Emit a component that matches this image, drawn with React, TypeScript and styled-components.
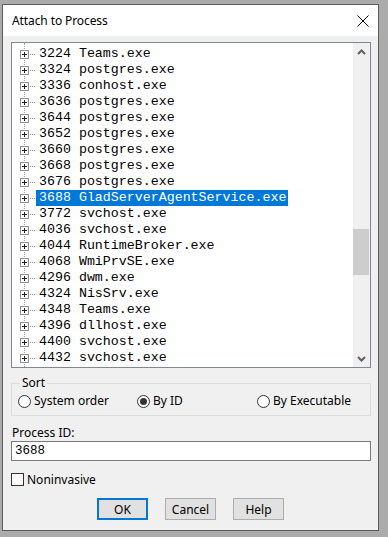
import React from "react";
import styled, { createGlobalStyle, css } from "styled-components";

const Global = createGlobalStyle`
  html, body { margin: 0; padding: 0; background: #ababab; }
  body { width: 388px; height: 537px; overflow: hidden; font-family: "Noto Sans", "Liberation Sans", sans-serif; }
  * { box-sizing: border-box; }
`;

const Page = styled.div`
  width: 388px;
  height: 537px;
  padding: 4px 0 0 2px;
  background: #ababab;
`;

const Dialog = styled.div`
  width: 377px;
  height: 527px;
  border: 1px solid #5c5c5c;
  background: #f0f0f0;
  display: flex;
  flex-direction: column;
`;

const TitleBar = styled.div`
  height: 31px;
  background: #ffffff;
  display: flex;
  align-items: center;
  justify-content: space-between;
  padding: 0 8px 0 9px;
  flex: none;
`;

const Title = styled.span`
  font-size: 12px;
  color: #000;
  letter-spacing: -0.1px;
`;

const CloseIcon = styled.svg`
  width: 12px;
  height: 12px;
  margin-right: 1px;
`;

const Body = styled.div`
  flex: 1;
  display: flex;
  flex-direction: column;
  padding: 6px 7px 0 8px;
`;

const ListBox = styled.div`
  height: 326px;
  border: 1px solid #828790;
  background: #fff;
  display: flex;
  position: relative;
  flex: none;
`;

const Rows = styled.div`
  flex: 1;
  padding-top: 3px;
  position: relative;
  overflow: hidden;
`;

const TreeLine = styled.div`
  position: absolute;
  left: 12px;
  top: 0;
  bottom: 0;
  border-left: 1px dotted #a0a0a0;
`;

const Row = styled.div`
  height: 16px;
  display: flex;
  align-items: center;
  position: relative;
`;

const Expander = styled.div`
  width: 9px;
  height: 9px;
  margin-left: 8px;
  border: 1px solid #919191;
  background: #fff;
  position: relative;
  flex: none;
  &::before {
    content: "";
    position: absolute;
    left: 1px;
    top: 3px;
    width: 5px;
    height: 1px;
    background: #1e1e1e;
  }
  &::after {
    content: "";
    position: absolute;
    left: 3px;
    top: 1px;
    width: 1px;
    height: 5px;
    background: #1e1e1e;
  }
`;

const Dots = styled.div`
  width: 5px;
  margin-left: 1px;
  border-top: 1px dotted #a0a0a0;
  flex: none;
`;

const ItemText = styled.span<{ $selected?: boolean }>`
  margin-left: 1px;
  padding: 0 2px 0 3px;
  height: 16px;
  line-height: 16px;
  font-family: "Liberation Mono", "DejaVu Sans Mono", monospace;
  font-size: 13.3px;
  color: #000;
  white-space: pre;
  ${(p) =>
    p.$selected &&
    css`
      background: #0078d7;
      color: #fff;
    `}
`;

const ScrollBar = styled.div`
  width: 17px;
  background: #f0f0f0;
  display: flex;
  flex-direction: column;
  flex: none;
`;

const ScrollArrow = styled.div`
  height: 17px;
  display: flex;
  align-items: center;
  justify-content: center;
  flex: none;
`;

const ScrollTrack = styled.div`
  flex: 1;
  position: relative;
`;

const Thumb = styled.div`
  position: absolute;
  left: 0;
  right: 1px;
  background: #cdcdcd;
`;

const GroupBox = styled.fieldset`
  margin: 8px 0 0 0;
  padding: 0 0 0 6px;
  border: 1px solid #dcdcdc;
  height: 40px;
  display: block;
  flex: none;
`;

const Legend = styled.legend`
  font-size: 12px;
  padding: 0 2px;
  margin-left: 2px;
  color: #000;
  line-height: 14px;
`;

const RadioRow = styled.div`
  display: flex;
  align-items: center;
  width: 100%;
  margin-top: 3px;
`;

const RadioItem = styled.label<{ $w: number }>`
  display: flex;
  align-items: center;
  width: ${(p) => p.$w}px;
  font-size: 12px;
  line-height: 16px;
  color: #000;
  gap: 3px;
`;

const RadioCircle = styled.span<{ $checked?: boolean }>`
  width: 13px;
  height: 13px;
  border-radius: 50%;
  border: 1px solid #333;
  background: #fff;
  display: flex;
  align-items: center;
  justify-content: center;
  flex: none;
  &::after {
    content: "";
    width: 7px;
    height: 7px;
    border-radius: 50%;
    background: ${(p) => (p.$checked ? "#333" : "transparent")};
  }
`;

const FieldLabel = styled.div`
  margin-top: 9px;
  font-size: 12px;
  color: #000;
  line-height: 16px;
  padding-left: 1px;
`;

const TextInput = styled.div`
  height: 20px;
  border: 1px solid #7a7a7a;
  background: #fff;
  display: flex;
  align-items: center;
  padding-left: 3px;
  font-family: "Liberation Mono", "DejaVu Sans Mono", monospace;
  font-size: 12.5px;
  color: #000;
  flex: none;
`;

const CheckRow = styled.label`
  margin-top: 10px;
  display: flex;
  align-items: center;
  gap: 3px;
  font-size: 12px;
  color: #000;
`;

const CheckBox = styled.span`
  width: 13px;
  height: 13px;
  border: 1px solid #333;
  background: #fff;
  flex: none;
`;

const ButtonRow = styled.div`
  margin-top: 10px;
  display: flex;
  padding-left: 86px;
  gap: 17px;
`;

const Button = styled.button<{ $default?: boolean }>`
  width: 51px;
  height: 22px;
  background: #e1e1e1;
  border: 1px solid #adadad;
  font-family: "Noto Sans", "Liberation Sans", sans-serif;
  font-size: 12px;
  color: #000;
  padding: 0;
  ${(p) =>
    p.$default &&
    css`
      border: 2px solid #0078d7;
    `}
`;

const processes: [string, string][] = [
  ["3224", "Teams.exe"],
  ["3324", "postgres.exe"],
  ["3336", "conhost.exe"],
  ["3636", "postgres.exe"],
  ["3644", "postgres.exe"],
  ["3652", "postgres.exe"],
  ["3660", "postgres.exe"],
  ["3668", "postgres.exe"],
  ["3676", "postgres.exe"],
  ["3688", "GladServerAgentService.exe"],
  ["3772", "svchost.exe"],
  ["4036", "svchost.exe"],
  ["4044", "RuntimeBroker.exe"],
  ["4068", "WmiPrvSE.exe"],
  ["4296", "dwm.exe"],
  ["4324", "NisSrv.exe"],
  ["4348", "Teams.exe"],
  ["4396", "dllhost.exe"],
  ["4400", "svchost.exe"],
  ["4432", "svchost.exe"],
];

const Chevron = ({ up }: { up?: boolean }) => (
  <svg width="9" height="6" viewBox="0 0 9 6">
    <path
      d={up ? "M1 5 L4.5 1.5 L8 5" : "M1 1 L4.5 4.5 L8 1"}
      fill="none"
      stroke="#606060"
      strokeWidth="2"
    />
  </svg>
);

export default function App() {
  return (
    <>
      <Global />
      <Page>
        <Dialog>
          <TitleBar>
            <Title>Attach to Process</Title>
            <CloseIcon viewBox="0 0 12 12">
              <path d="M0.5 0.5 L11.5 11.5 M11.5 0.5 L0.5 11.5" stroke="#000" strokeWidth="1" />
            </CloseIcon>
          </TitleBar>
          <Body>
            <ListBox>
              <Rows>
                <TreeLine />
                {processes.map(([pid, name]) => (
                  <Row key={pid}>
                    <Expander />
                    <Dots />
                    <ItemText $selected={pid === "3688"}>{`${pid} ${name}`}</ItemText>
                  </Row>
                ))}
              </Rows>
              <ScrollBar>
                <ScrollArrow>
                  <Chevron up />
                </ScrollArrow>
                <ScrollTrack>
                  <Thumb style={{ top: "169px", height: "46px" }} />
                </ScrollTrack>
                <ScrollArrow>
                  <Chevron />
                </ScrollArrow>
              </ScrollBar>
            </ListBox>
            <GroupBox>
              <Legend>Sort</Legend>
              <RadioRow>
                <RadioItem $w={119}>
                  <RadioCircle />
                  System order
                </RadioItem>
                <RadioItem $w={120}>
                  <RadioCircle $checked />
                  By ID
                </RadioItem>
                <RadioItem $w={110}>
                  <RadioCircle />
                  By Executable
                </RadioItem>
              </RadioRow>
            </GroupBox>
            <FieldLabel>Process ID:</FieldLabel>
            <TextInput>3688</TextInput>
            <CheckRow>
              <CheckBox />
              Noninvasive
            </CheckRow>
            <ButtonRow>
              <Button $default>OK</Button>
              <Button>Cancel</Button>
              <Button>Help</Button>
            </ButtonRow>
          </Body>
        </Dialog>
      </Page>
    </>
  );
}
